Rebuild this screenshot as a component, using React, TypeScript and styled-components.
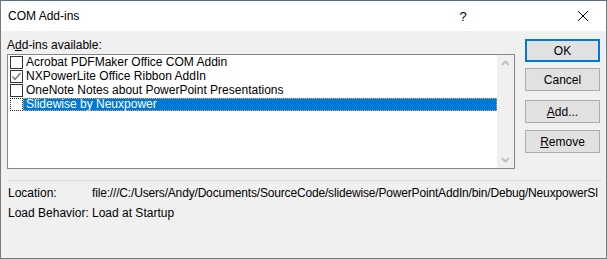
import React from 'react';
import styled, { createGlobalStyle } from 'styled-components';

const GlobalStyle = createGlobalStyle`
  html, body {
    margin: 0;
    padding: 0;
    background: #ffffff;
  }
  body {
    font-family: "Liberation Sans", Arial, sans-serif;
    font-size: 12px;
    color: #000;
  }
`;

const Window = styled.div`
  width: 607px;
  height: 259px;
  box-sizing: border-box;
  border: 1px solid #7a7a7a;
  border-top-color: #5b6b86;
  display: flex;
  flex-direction: column;
  background: #f0f0f0;
`;

const TitleBar = styled.div`
  height: 30px;
  background: #ffffff;
  display: flex;
  align-items: center;
  padding-left: 7px;
`;

const Title = styled.div`
  flex: 1;
  font-size: 12px;
`;

const CaptionButton = styled.div<{ $gap?: number }>`
  width: 46px;
  height: 30px;
  display: flex;
  align-items: center;
  justify-content: center;
  margin-right: ${p => p.$gap ?? 0}px;
  font-size: 13px;
  color: #000;
`;

const Body = styled.div`
  flex: 1;
  display: flex;
  flex-direction: column;
  padding: 6px 6px 0 6px;
`;

const Top = styled.div`
  display: flex;
  gap: 10px;
`;

const LeftCol = styled.div`
  width: 508px;
  display: flex;
  flex-direction: column;
`;

const Label = styled.div`
  height: 15px;
  line-height: 15px;
  margin-top: 1px;
  margin-bottom: 1px;
`;

const ListBox = styled.div`
  height: 115px;
  box-sizing: border-box;
  border: 1px solid #828790;
  background: #ffffff;
  display: flex;
`;

const Rows = styled.div`
  flex: 1;
  padding-left: 2px;
`;

const Row = styled.div`
  height: 14px;
  display: flex;
  align-items: flex-end;
`;

const Box = styled.div<{ $focus?: boolean }>`
  width: 13px;
  height: 13px;
  box-sizing: border-box;
  border: 1px ${p => (p.$focus ? 'dotted' : 'solid')} #333333;
  background: #ffffff;
  display: flex;
  align-items: center;
  justify-content: center;
`;

const ItemText = styled.div<{ $selected?: boolean }>`
  flex: 1;
  height: 13px;
  line-height: 13px;
  padding-left: 3px;
  white-space: nowrap;
  background: ${p => (p.$selected ? '#0078d7' : 'transparent')};
  color: ${p => (p.$selected ? '#ffffff' : '#000000')};
  outline: ${p => (p.$selected ? '1px dotted #f5a742' : 'none')};
  outline-offset: -1px;
`;

const ScrollBar = styled.div`
  width: 17px;
  background: #f0f0f0;
  display: flex;
  flex-direction: column;
  justify-content: space-between;
  align-items: center;
  padding: 5px 0;
`;

const Buttons = styled.div`
  display: flex;
  flex-direction: column;
  padding-top: 2px;
`;

const Button = styled.div<{ $default?: boolean; $mt?: number }>`
  width: 75px;
  height: 23px;
  box-sizing: border-box;
  margin-top: ${p => p.$mt ?? 0}px;
  border: ${p => (p.$default ? '2px solid #0078d7' : '1px solid #adadad')};
  background: #e1e1e1;
  display: flex;
  align-items: center;
  justify-content: center;
`;

const Separator = styled.div`
  height: 1px;
  background: #d7d7d7;
  margin: 11px 0 0 1px;
  width: 593px;
`;

const Info = styled.div`
  display: grid;
  grid-template-columns: 84px 1fr;
  grid-auto-rows: 20px;
  align-items: center;
  padding-top: 2px;
  padding-left: 1px;
`;

const Value = styled.div<{ $tight?: boolean }>`
  white-space: nowrap;
  letter-spacing: ${p => (p.$tight ? '-0.17px' : 'normal')};
`;

const Check = () => (
  <svg width="11" height="11" viewBox="0 0 11 11">
    <polyline points="1.5,5.5 4,8.5 9.5,2" fill="none" stroke="#6b6b6b" strokeWidth="1.2" />
  </svg>
);

const Chevron = ({ up }: { up?: boolean }) => (
  <svg width="9" height="6" viewBox="0 0 9 6">
    <polyline
      points={up ? '1,5 4.5,1.5 8,5' : '1,1 4.5,4.5 8,1'}
      fill="none"
      stroke="#c2c2c2"
      strokeWidth="2"
    />
  </svg>
);

const items = [
  { name: 'Acrobat PDFMaker Office COM Addin', checked: false },
  { name: 'NXPowerLite Office Ribbon AddIn', checked: true },
  { name: 'OneNote Notes about PowerPoint Presentations', checked: false },
  { name: 'Slidewise by Neuxpower', checked: false, selected: true },
];

export default function App() {
  return (
    <>
      <GlobalStyle />
      <Window>
        <TitleBar>
          <Title>COM Add-ins</Title>
          <CaptionButton $gap={74}>?</CaptionButton>
          <CaptionButton>
            <svg width="12" height="12" viewBox="0 0 12 12">
              <path d="M1 1 L11 11 M11 1 L1 11" stroke="#000" strokeWidth="1" />
            </svg>
          </CaptionButton>
        </TitleBar>
        <Body>
          <Top>
            <LeftCol>
              <Label>
                A<u>d</u>d-ins available:
              </Label>
              <ListBox>
                <Rows>
                  {items.map(it => (
                    <Row key={it.name}>
                      <Box $focus={it.selected}>{it.checked && <Check />}</Box>
                      <ItemText $selected={it.selected}>{it.name}</ItemText>
                    </Row>
                  ))}
                </Rows>
                <ScrollBar>
                  <Chevron up />
                  <Chevron />
                </ScrollBar>
              </ListBox>
            </LeftCol>
            <Buttons>
              <Button $default>OK</Button>
              <Button $mt={6}>Cancel</Button>
              <Button $mt={9}>
                <span><u>A</u>dd...</span>
              </Button>
              <Button $mt={7}>
                <span><u>R</u>emove</span>
              </Button>
            </Buttons>
          </Top>
          <Separator />
          <Info>
            <div>Location:</div>
            <Value $tight>file:///C:/Users/Andy/Documents/SourceCode/slidewise/PowerPointAddIn/bin/Debug/NeuxpowerSl</Value>
            <div>Load Behavior:</div>
            <Value>Load at Startup</Value>
          </Info>
        </Body>
      </Window>
    </>
  );
}
